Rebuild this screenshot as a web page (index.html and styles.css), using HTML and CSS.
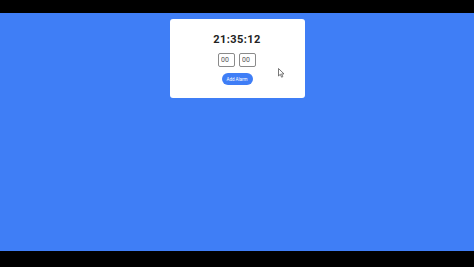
FILE: index.html
```html
<!DOCTYPE html>
<html lang="en">
  <head>
    <meta charset="UTF-8" />
    <meta name="viewport" content="width=device-width, initial-scale=1.0" />
    <title>Alarm Clock</title>
    <link rel="stylesheet" href="styles.css">
  </head>
  <body>
    <div class="screen">
      <div class="card">
        <h1 class="time">21:35:12</h1>
        <div class="inputs">
          <input type="text" class="field" value="00" />
          <input type="text" class="field" value="00" />
        </div>
        <button class="add">Add Alarm</button>
      </div>
      <svg class="cursor" width="7" height="10" viewBox="0 0 7 10">
        <path d="M0.5 0.5 L0.5 8 L2.3 6.3 L3.6 9.2 L4.8 8.7 L3.6 5.9 L6 5.9 Z" fill="#fff" stroke="#555" stroke-width="0.8" />
      </svg>
    </div>
  </body>
</html>
```

FILE: styles.css
```css
* {
  margin: 0;
  padding: 0;
  box-sizing: border-box;
  font-family: "Roboto", "Liberation Sans", sans-serif;
}
body {
  background-color: #000;
  height: 267px;
  overflow: hidden;
}
.screen {
  position: relative;
  margin-top: 13px;
  height: 238px;
  background-color: #3f7ef6;
  display: flex;
  flex-direction: column;
  align-items: center;
  padding-top: 6px;
}
.card {
  width: 135px;
  height: 79px;
  background-color: #fff;
  border-radius: 3px;
  display: flex;
  flex-direction: column;
  align-items: center;
  padding-top: 15px;
}
.time {
  font-size: 11px;
  font-weight: 700;
  letter-spacing: 0.4px;
  color: #222;
  line-height: 11px;
}
.inputs {
  display: flex;
  gap: 4px;
  margin-top: 8px;
}
.field {
  width: 17px;
  height: 14px;
  border: 1.5px solid #8a8a8a;
  border-radius: 2px;
  font-size: 7px;
  color: #555;
  -webkit-text-fill-color: #555;
  padding-left: 2px;
  outline: none;
}
.add {
  margin-top: 6px;
  width: 31px;
  height: 12px;
  border: none;
  border-radius: 6px;
  background-color: #3f7ef6;
  color: #fff;
  font-size: 4.5px;
  cursor: pointer;
}
.cursor {
  position: absolute;
  left: 278px;
  top: 55px;
}
```
